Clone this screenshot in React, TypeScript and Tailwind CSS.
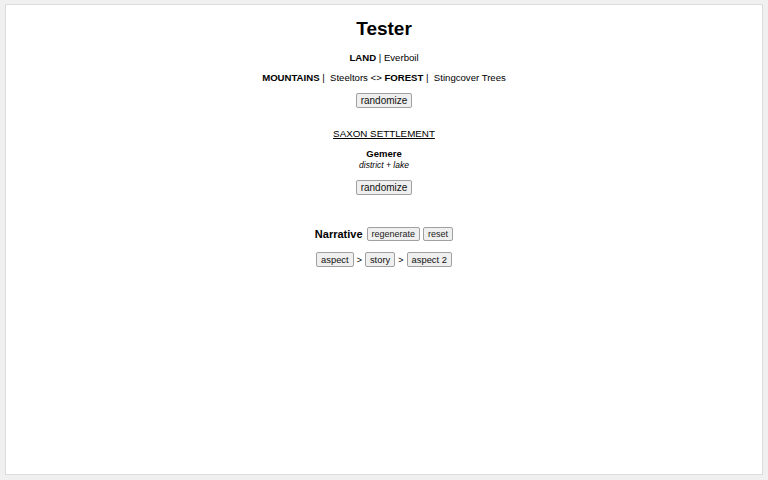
import React from 'react';

const Btn = ({ children, small, mid }: { children: React.ReactNode; small?: boolean; mid?: boolean }) => (
  <button
    className={
      small
        ? 'bg-[#efefef] border border-[#a0a0a0] rounded-[2px] px-[4px] h-[14px] leading-[12px] text-[9px] text-[#222]'
        : mid
        ? 'bg-[#efefef] border border-[#a0a0a0] rounded-[2px] px-[4px] h-[15px] leading-[13px] text-[9.4px] text-[#111]'
        : 'bg-[#efefef] border border-[#a0a0a0] rounded-[2px] px-[4px] h-[15px] leading-[13px] text-[10px] text-[#111]'
    }
  >
    {children}
  </button>
);

export default function App() {
  return (
    <div className="h-[480px] w-[768px] bg-[#f0f0f0] pt-[4px] pb-[5px] px-[5px] font-['Liberation_Sans',Arial,sans-serif] text-black">
      <div className="h-full bg-white border border-[#dcdcdc] flex flex-col items-center leading-[12px]">
        <h1 className="mt-[13px] text-[19px] leading-[22px] font-bold">Tester</h1>

        <div className="mt-[12px] text-[9.6px]">
          <b>LAND</b> | Everboil
        </div>

        <div className="mt-[8px] text-[9.6px] whitespace-pre">
          <b>MOUNTAINS</b>{' |  Steeltors <> '}<b>FOREST</b>{' |  Stingcover Trees'}
        </div>

        <div className="mt-[9px] flex">
          <Btn>randomize</Btn>
        </div>

        <div className="mt-[20px] text-[9.8px] underline">SAXON SETTLEMENT</div>

        <div className="mt-[8px] text-[9.5px] font-bold">Gemere</div>
        <div className="text-[8.5px] leading-[10px] italic">district + lake</div>

        <div className="mt-[10px] flex">
          <Btn>randomize</Btn>
        </div>

        <div className="mt-[32px] flex items-center gap-[3px]">
          <span className="text-[11px] leading-[14px] font-bold mr-[1px]">Narrative</span>
          <Btn small>regenerate</Btn>
          <Btn small>reset</Btn>
        </div>

        <div className="mt-[11px] flex items-center gap-[3px] text-[9px]">
          <Btn mid>aspect</Btn>
          <span>&gt;</span>
          <Btn mid>story</Btn>
          <span>&gt;</span>
          <Btn mid>aspect 2</Btn>
        </div>
      </div>
    </div>
  );
}
